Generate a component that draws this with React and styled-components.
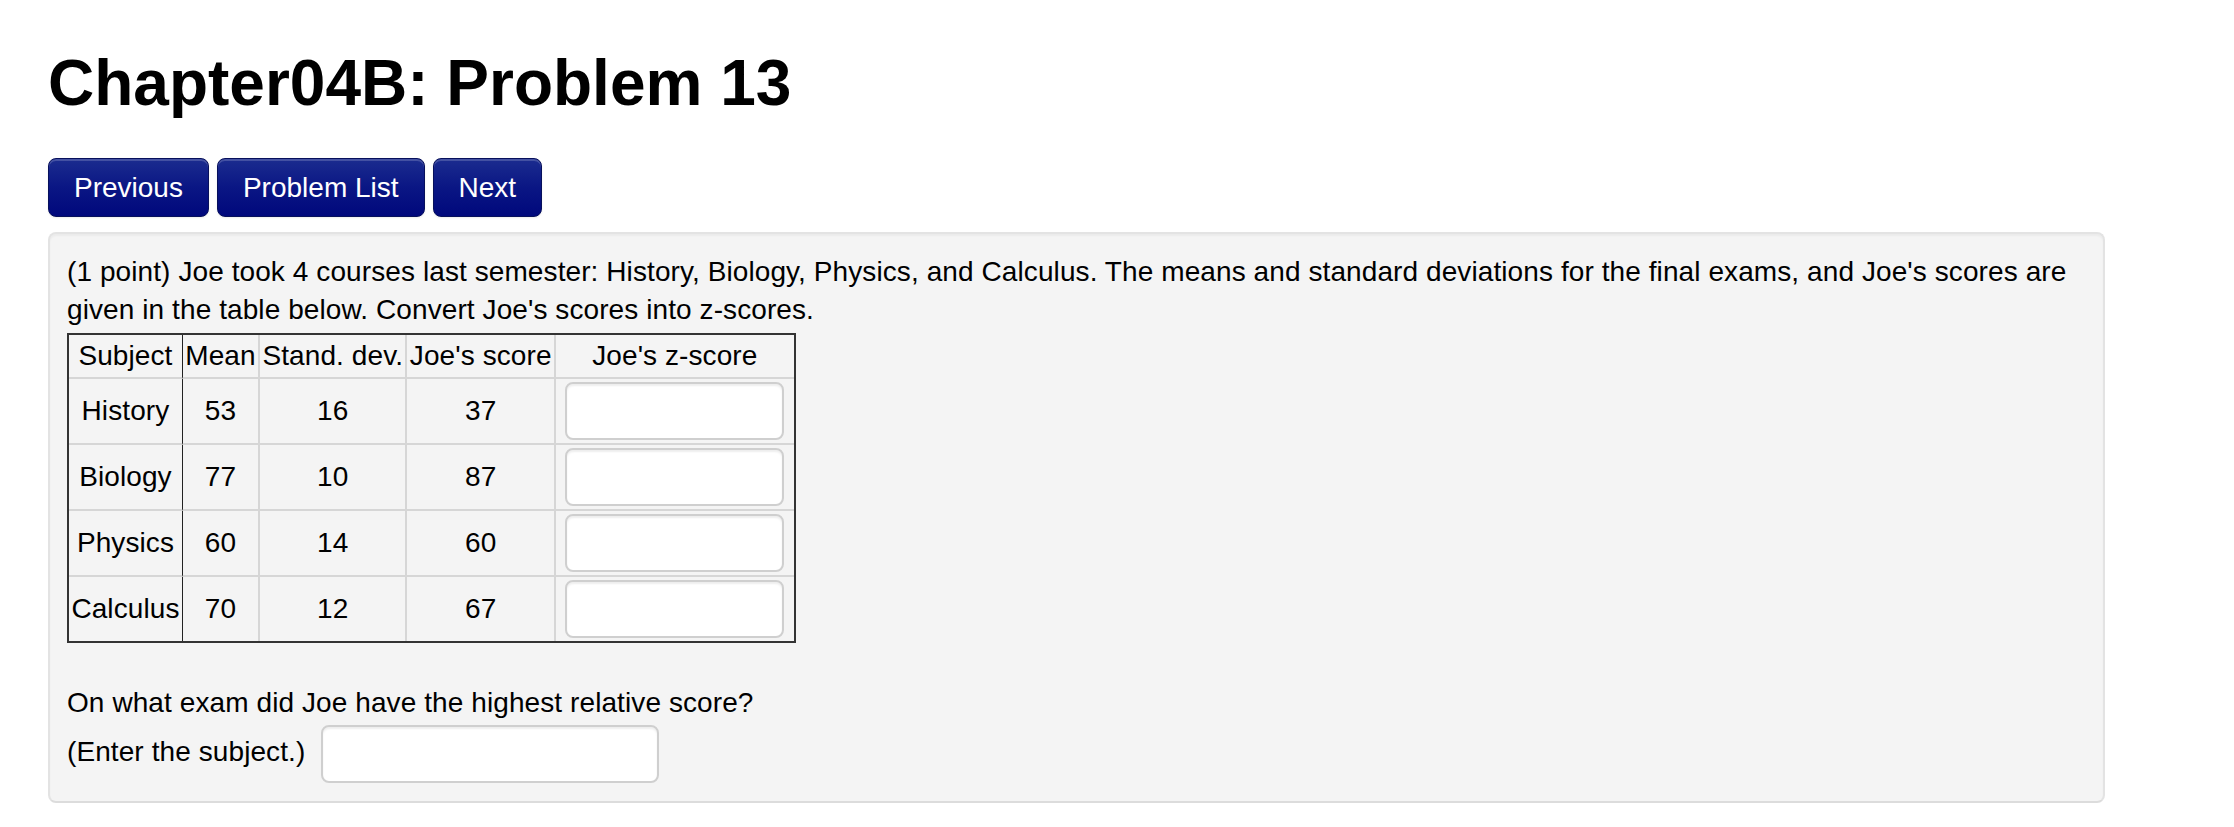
import React from "react";
import styled, { createGlobalStyle } from "styled-components";

const Global = createGlobalStyle`
  html, body { margin: 0; padding: 0; background: #ffffff; }
  body {
    font-family: "Liberation Sans", Arial, Helvetica, sans-serif;
    font-size: 28px;
    line-height: 40px;
    color: #000;
  }
`;

const Page = styled.div`
  padding: 43px 0 40px 48px;
`;

const Title = styled.h1`
  margin: 0;
  font-size: 64px;
  line-height: 80px;
  font-weight: bold;
  color: #000;
`;

const NavBar = styled.nav`
  display: flex;
  gap: 8px;
  margin-top: 35px;
`;

const NavButton = styled.button`
  font-family: inherit;
  font-size: 28px;
  line-height: 39px;
  padding: 9px 25px;
  color: #fff;
  border: 1px solid #07105c;
  border-radius: 8px;
  background: linear-gradient(to bottom, #1b2c8f 0%, #0a1684 50%, #00087c 100%);
  box-shadow: inset 0 2px 0 rgba(255, 255, 255, 0.18), 0 1px 2px rgba(0, 0, 0, 0.08);
  cursor: pointer;
`;

const Panel = styled.div`
  box-sizing: border-box;
  width: 2057px;
  margin-top: 15px;
  padding: 19px 16px 18px 17px;
  background: #f4f4f4;
  border: 2px solid #e3e3e3;
  border-bottom-color: #dcdcdc;
  border-radius: 8px;
  box-shadow: inset 0 2px 2px rgba(0, 0, 0, 0.04);
  letter-spacing: 0.09px;
`;

const Intro = styled.p`
  margin: 0;
  line-height: 38px;
`;

const Table = styled.table`
  margin-top: 4px;
  border-collapse: separate;
  border-spacing: 0;
  border: 2px solid #333;
`;

const Cell = styled.td`
  padding: ${(p) => (p.$head ? "1px 2.4px" : "3px 2.4px")};
  text-align: center;
  vertical-align: middle;
  font-weight: normal;
  line-height: 40px;
  white-space: nowrap;
  border-right: ${(p) => (p.$first ? "1px solid #222" : p.$last ? "none" : "2px solid #d6d6d6")};
  border-bottom: ${(p) => (p.$bottom ? "none" : "2px solid #d6d6d6")};
`;

const TableInput = styled.input`
  display: block;
  box-sizing: border-box;
  width: 219px;
  height: 58px;
  margin: 0 7px;
  border: 2px solid #cfcfcf;
  border-radius: 8px;
  background: #fff;
  box-shadow: inset 0 2px 2px rgba(0, 0, 0, 0.07);
  font-family: inherit;
  font-size: 28px;
  padding: 8px 12px;
`;

const Question = styled.p`
  margin: 41px 0 0;
  line-height: 38px;
`;

const AnswerRow = styled.div`
  display: flex;
  align-items: center;
  gap: 16px;
  margin-top: 3px;
`;

const AnswerLabel = styled.span`
  line-height: 38px;
  padding-bottom: 4px;
`;

const AnswerInput = styled(TableInput)`
  width: 338px;
  margin: 0;
`;

const rows = [
  ["History", 53, 16, 37],
  ["Biology", 77, 10, 87],
  ["Physics", 60, 14, 60],
  ["Calculus", 70, 12, 67],
];

const headers = ["Subject", "Mean", "Stand. dev.", "Joe's score", "Joe's z-score"];

export default function App() {
  return (
    <>
      <Global />
      <Page>
        <Title>Chapter04B: Problem 13</Title>
        <NavBar>
          <NavButton>Previous</NavButton>
          <NavButton>Problem List</NavButton>
          <NavButton>Next</NavButton>
        </NavBar>
        <Panel>
          <Intro>
            (1 point) Joe took 4 courses last semester: History, Biology, Physics, and Calculus. The means and
            standard deviations for the final exams, and Joe's scores are given in the table below. Convert Joe's
            scores into z-scores.
          </Intro>
          <Table>
            <thead>
              <tr>
                {headers.map((h, i) => (
                  <Cell as="th" key={h} $head $first={i === 0} $last={i === headers.length - 1}>
                    {h}
                  </Cell>
                ))}
              </tr>
            </thead>
            <tbody>
              {rows.map((r, ri) => {
                const bottom = ri === rows.length - 1;
                return (
                  <tr key={r[0]}>
                    <Cell $first $bottom={bottom}>{r[0]}</Cell>
                    <Cell $bottom={bottom}>{r[1]}</Cell>
                    <Cell $bottom={bottom}>{r[2]}</Cell>
                    <Cell $bottom={bottom}>{r[3]}</Cell>
                    <Cell $last $bottom={bottom}>
                      <TableInput type="text" aria-label={`${r[0]} z-score`} />
                    </Cell>
                  </tr>
                );
              })}
            </tbody>
          </Table>
          <Question>On what exam did Joe have the highest relative score?</Question>
          <AnswerRow>
            <AnswerLabel>(Enter the subject.)</AnswerLabel>
            <AnswerInput type="text" aria-label="subject" />
          </AnswerRow>
        </Panel>
      </Page>
    </>
  );
}
